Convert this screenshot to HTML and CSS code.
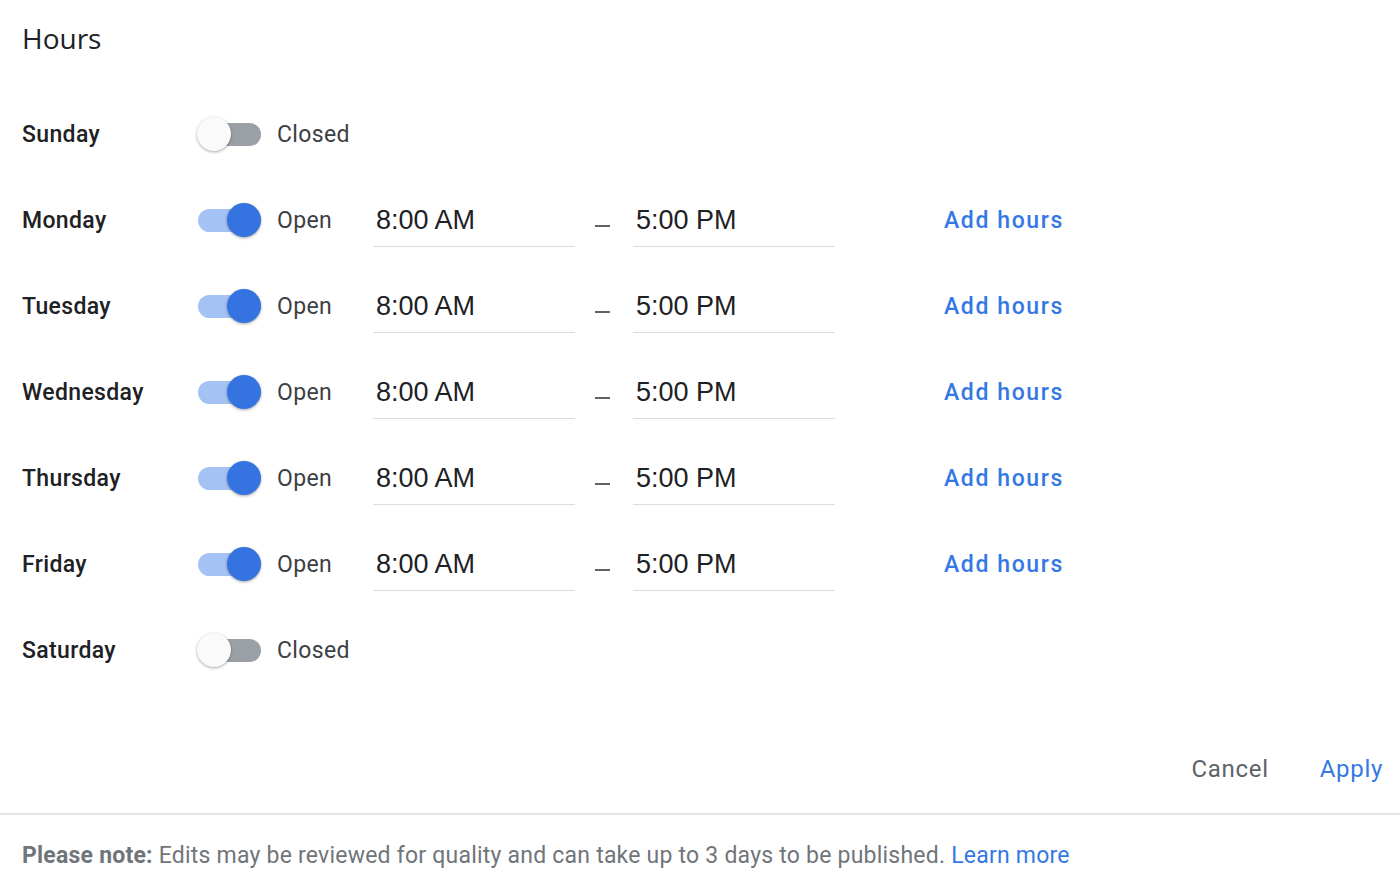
FILE: index.html
```html
<!DOCTYPE html>
<html lang="en">
<head>
<meta charset="utf-8">
<title>Hours</title>
<link rel="stylesheet" href="styles.css">
</head>
<body>
<div class="dialog">
  <h1 class="title">Hours</h1>
  <div class="rows">
    <div class="row">
      <div class="day">Sunday</div>
      <div class="toggle off"><span class="track"></span><span class="thumb"></span></div>
      <div class="status">Closed</div>
    </div>
    <div class="row">
      <div class="day">Monday</div>
      <div class="toggle on"><span class="track"></span><span class="thumb"></span></div>
      <div class="status">Open</div>
      <div class="time">8:00 AM</div>
      <div class="dash-col"><span class="dash"></span></div>
      <div class="time">5:00 PM</div>
      <a class="add" href="#">Add hours</a>
    </div>
    <div class="row">
      <div class="day">Tuesday</div>
      <div class="toggle on"><span class="track"></span><span class="thumb"></span></div>
      <div class="status">Open</div>
      <div class="time">8:00 AM</div>
      <div class="dash-col"><span class="dash"></span></div>
      <div class="time">5:00 PM</div>
      <a class="add" href="#">Add hours</a>
    </div>
    <div class="row">
      <div class="day">Wednesday</div>
      <div class="toggle on"><span class="track"></span><span class="thumb"></span></div>
      <div class="status">Open</div>
      <div class="time">8:00 AM</div>
      <div class="dash-col"><span class="dash"></span></div>
      <div class="time">5:00 PM</div>
      <a class="add" href="#">Add hours</a>
    </div>
    <div class="row">
      <div class="day">Thursday</div>
      <div class="toggle on"><span class="track"></span><span class="thumb"></span></div>
      <div class="status">Open</div>
      <div class="time">8:00 AM</div>
      <div class="dash-col"><span class="dash"></span></div>
      <div class="time">5:00 PM</div>
      <a class="add" href="#">Add hours</a>
    </div>
    <div class="row">
      <div class="day">Friday</div>
      <div class="toggle on"><span class="track"></span><span class="thumb"></span></div>
      <div class="status">Open</div>
      <div class="time">8:00 AM</div>
      <div class="dash-col"><span class="dash"></span></div>
      <div class="time">5:00 PM</div>
      <a class="add" href="#">Add hours</a>
    </div>
    <div class="row">
      <div class="day">Saturday</div>
      <div class="toggle off"><span class="track"></span><span class="thumb"></span></div>
      <div class="status">Closed</div>
    </div>
  </div>
  <div class="actions">
    <button class="btn cancel">Cancel</button>
    <button class="btn apply">Apply</button>
  </div>
  <div class="footer">
    <p class="note"><b>Please note:</b> Edits may be reviewed for quality and can take up to 3 days to be published. <a href="#" class="learn">Learn more</a></p>
  </div>
</div>
</body>
</html>
```
FILE: styles.css
```css
html, body {
  margin: 0;
  padding: 0;
  background: #ffffff;
}
body {
  font-family: Roboto, "Liberation Sans", sans-serif;
  color: #202124;
}
.dialog {
  width: 1400px;
  height: 880px;
  overflow: hidden;
}
.title {
  margin: 0;
  height: 91px;
  box-sizing: border-box;
  padding: 18px 22px 0;
  font-family: "Open Sans", sans-serif;
  font-weight: 400;
  font-size: 28px;
  line-height: 40px;
  color: #202124;
}
.rows {
  display: flex;
  flex-direction: column;
}
.row {
  display: flex;
  align-items: center;
  height: 86px;
  padding-left: 22px;
}
.day {
  width: 175px;
  font-family: Roboto, sans-serif;
  font-weight: 500;
  font-size: 23px;
  letter-spacing: 0.35px;
  color: #202124;
}
.toggle {
  position: relative;
  width: 66px;
  height: 36px;
  flex: none;
}
.toggle .track {
  position: absolute;
  left: 1px;
  top: 7px;
  width: 63px;
  height: 23px;
  border-radius: 12px;
}
.toggle .thumb {
  position: absolute;
  top: 1px;
  width: 34px;
  height: 34px;
  border-radius: 50%;
  box-shadow: 0 1px 3px rgba(0,0,0,0.35);
}
.toggle.off .track { background: #9aa0a6; }
.toggle.off .thumb { left: 0; background: #fafafa; }
.toggle.on .track { background: #a5c2f4; }
.toggle.on .thumb { left: 30px; background: #3574e0; }
.status {
  margin-left: 14px;
  width: 96px;
  font-family: Roboto, sans-serif;
  font-size: 23px;
  letter-spacing: 0.35px;
  color: #3c4043;
}
.time {
  width: 199px;
  height: 51px;
  padding-left: 3px;
  border-bottom: 1px solid #dadce0;
  font-family: "Liberation Sans", Arial, sans-serif;
  font-size: 27px;
  line-height: 51px;
  margin-top: 1px;
  color: #202124;
}
.dash-col {
  width: 58px;
  display: flex;
  justify-content: center;
  padding-top: 12px;
}
.dash {
  display: block;
  width: 15px;
  height: 2px;
  background: #5f6368;
  margin-left: -3px;
}
.add {
  margin-left: 109px;
  font-family: Roboto, sans-serif;
  font-weight: 500;
  font-size: 23px;
  letter-spacing: 1.6px;
  color: #3478e5;
  text-decoration: none;
}
.actions {
  height: 122px;
  box-sizing: border-box;
  padding: 32px 17px 0 0;
  display: flex;
  align-items: center;
  justify-content: flex-end;
  gap: 51px;
  border-bottom: 2px solid #e3e4e6;
}
.btn {
  border: 0;
  background: none;
  padding: 0;
  font-family: Roboto, sans-serif;
  font-size: 24px;
  letter-spacing: 0.7px;
  cursor: pointer;
}
.cancel { color: #5f6368; }
.apply { color: #3478e5; }
.footer {
  padding: 26px 22px 0;
}
.note {
  margin: 0;
  font-family: Roboto, sans-serif;
  font-size: 23px;
  letter-spacing: 0.22px;
  line-height: 30px;
  color: #70757a;
}
.note b { font-weight: 700; }
.learn {
  color: #3478e5;
  text-decoration: none;
}
```
